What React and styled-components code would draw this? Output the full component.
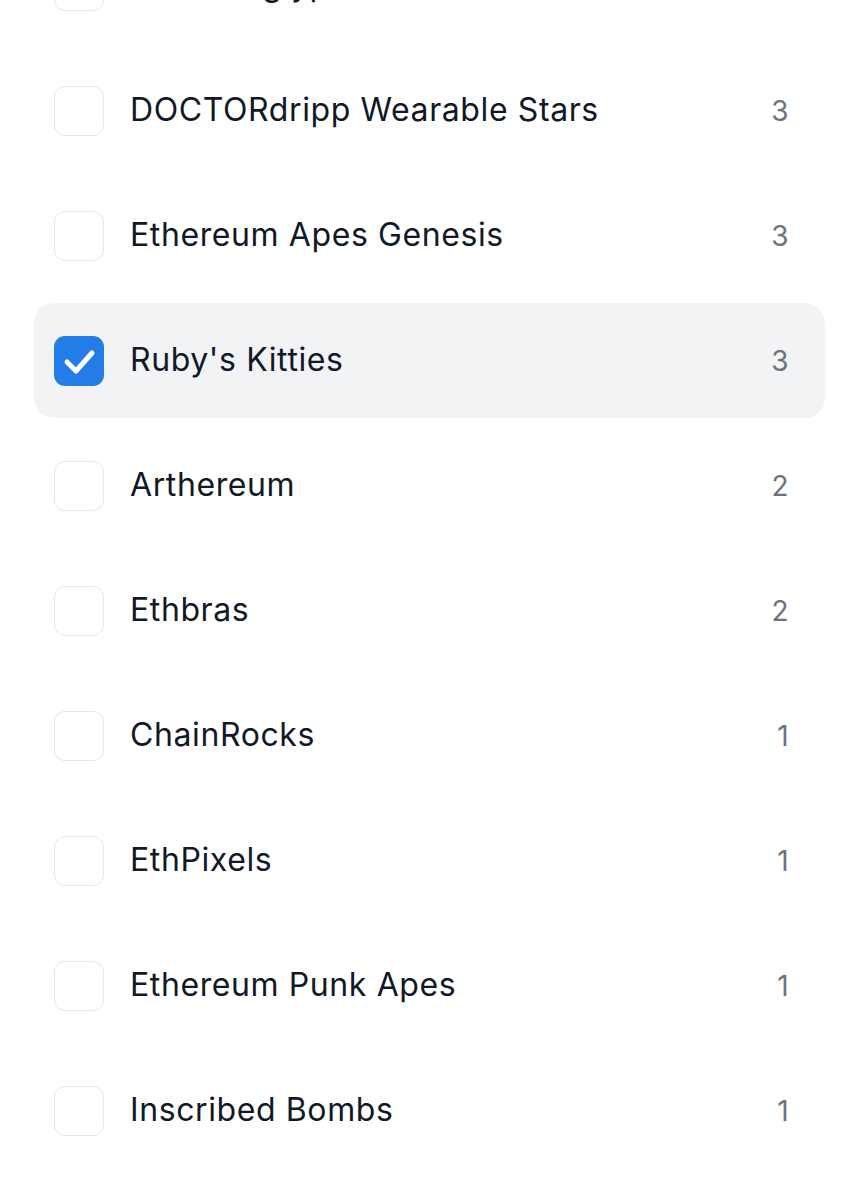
import React from "react";
import styled, { createGlobalStyle } from "styled-components";

const GlobalStyle = createGlobalStyle`
  html, body {
    margin: 0;
    padding: 0;
    background: #ffffff;
    font-family: Inter, "Noto Sans", sans-serif;
    overflow: hidden;
  }
`;

const List = styled.ul`
  list-style: none;
  margin: -72px 0 0 0;
  padding: 0 28px 0 34px;
  display: flex;
  flex-direction: column;
  gap: 10px;
`;

const Row = styled.li`
  display: flex;
  align-items: center;
  height: 115px;
  padding: 0 36px 0 20px;
  border-radius: 20px;
  background: ${(props) => (props.active ? "#f2f3f5" : "transparent")};
`;

const Box = styled.span`
  flex: none;
  width: 50px;
  height: 50px;
  box-sizing: border-box;
  border-radius: 11px;
  border: ${(props) => (props.checked ? "none" : "1.5px solid #e5e7eb")};
  background: ${(props) => (props.checked ? "#247de6" : "#ffffff")};
  display: flex;
  align-items: center;
  justify-content: center;
`;

const Label = styled.span`
  flex: 1;
  margin-left: 26px;
  margin-top: -3px;
  font-size: 32px;
  color: #111827;
  letter-spacing: 0.6px;
`;

const Count = styled.span`
  font-size: 28px;
  color: #6b7280;
  letter-spacing: 0.4px;
`;

const Check = () => (
  <svg width="50" height="50" viewBox="0 0 50 50">
    <path
      d="M13 26 L22 35 L38 17"
      fill="none"
      stroke="#ffffff"
      strokeWidth="5"
      strokeLinecap="round"
      strokeLinejoin="round"
    />
  </svg>
);

const items = [
  { name: "Abstractglyphs", count: 3 },
  { name: "DOCTORdripp Wearable Stars", count: 3 },
  { name: "Ethereum Apes Genesis", count: 3 },
  { name: "Ruby's Kitties", count: 3, checked: true },
  { name: "Arthereum", count: 2 },
  { name: "Ethbras", count: 2 },
  { name: "ChainRocks", count: 1 },
  { name: "EthPixels", count: 1 },
  { name: "Ethereum Punk Apes", count: 1 },
  { name: "Inscribed Bombs", count: 1 },
];

const App = () => {
  return (
    <>
      <GlobalStyle />
      <List>
        {items.map((item) => (
          <Row key={item.name} active={item.checked}>
            <Box checked={item.checked}>{item.checked ? <Check /> : null}</Box>
            <Label>{item.name}</Label>
            <Count>{item.count}</Count>
          </Row>
        ))}
      </List>
    </>
  );
};

export default App;
